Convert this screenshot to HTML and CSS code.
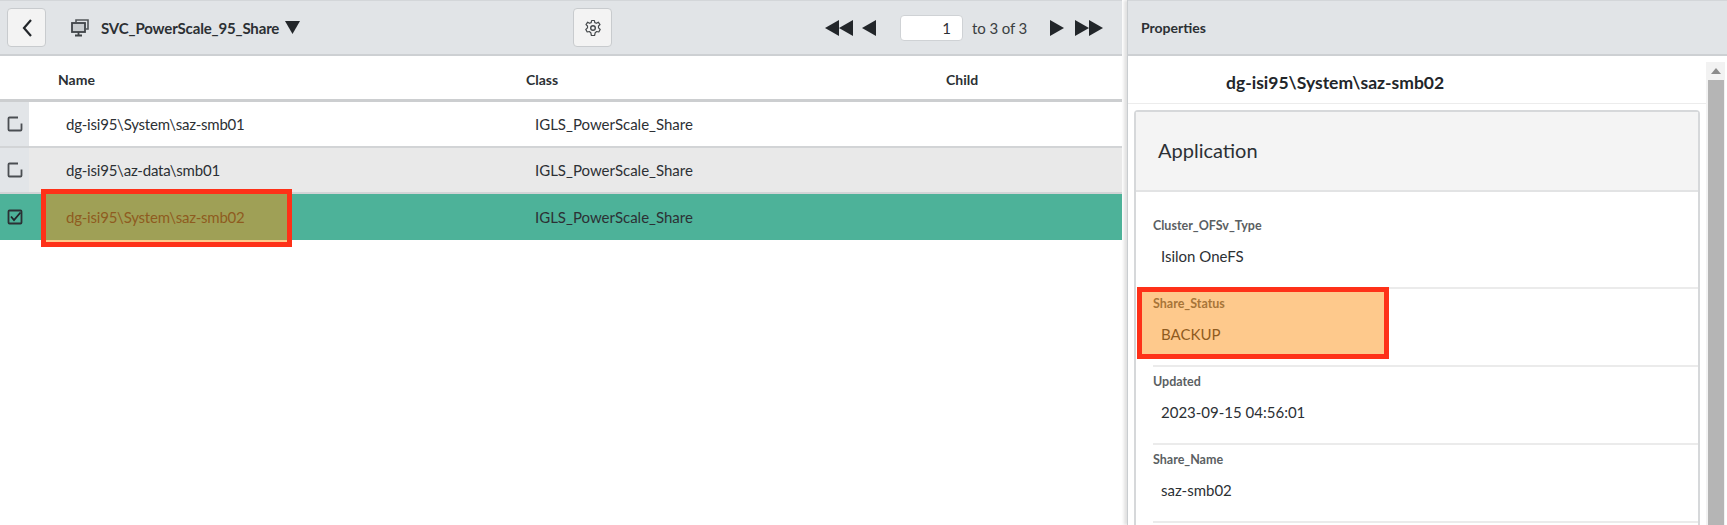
FILE: index.html
```html
<!DOCTYPE html>
<html lang="en">
<head>
  <meta charset="UTF-8" />
  <title>SVC_PowerScale_95_Share</title>
  <link rel="stylesheet" href="styles.css">
</head>
<body>
  <main class="list-pane">
    <div class="toolbar">
      <button class="tool-btn btn-return" aria-label="Back">
        <svg width="12" height="20" viewBox="0 0 12 20"><path d="M10 2 L3 10 L10 18" fill="none" stroke="#22262a" stroke-width="2.2"/></svg>
      </button>
      <div class="list-title">
        <svg class="monitor" width="18" height="18" viewBox="0 0 18 18"><path d="M5 3 V1 H17 V10 H15" fill="none" stroke="#53575b" stroke-width="1.6"/><rect x="1" y="4" width="13" height="9" fill="#c9cdd0" stroke="#3f4347" stroke-width="1.8"/><path d="M4 16.5 H11 M7.5 13 V16" stroke="#3f4347" stroke-width="1.8"/></svg>
        <span>SVC_PowerScale_95_Share</span>
        <svg width="15" height="13" viewBox="0 0 15 13"><path d="M0 0 H15 L7.5 13 Z" fill="#22262a"/></svg>
      </div>
      <button class="tool-btn btn-gear" aria-label="Settings">
        <svg width="18" height="18" viewBox="0 0 18 18"><circle cx="9" cy="9" r="2.3" fill="none" stroke="#45494c" stroke-width="1.4"/><path d="M7.6 1.5 H10.4 L10.8 3.6 L12.5 4.3 L14.3 3.2 L16 5.6 L14.5 7 V8.9 L16.2 10.4 L14.8 13 L12.7 12.5 L11.2 13.7 L10.6 16.5 H7.4 L6.8 13.7 L5.3 12.5 L3.2 13 L1.8 10.4 L3.5 8.9 V7 L2 5.6 L3.7 3.2 L5.5 4.3 L7.2 3.6 Z" fill="none" stroke="#45494c" stroke-width="1.2" stroke-linejoin="round"/></svg>
      </button>
      <div class="pager">
        <svg width="28" height="16" viewBox="0 0 28 16"><path d="M14 0 V16 L0 8 Z M28 0 V16 L14 8 Z" fill="#22262a"/></svg>
        <svg class="pager-prev" width="14" height="16" viewBox="0 0 14 16"><path d="M14 0 V16 L0 8 Z" fill="#22262a"/></svg>
        <input class="page-input" type="text" value="1" aria-label="Page">
        <span class="page-text">to 3 of 3</span>
        <svg class="pager-next" width="14" height="16" viewBox="0 0 14 16"><path d="M0 0 V16 L14 8 Z" fill="#22262a"/></svg>
        <svg width="28" height="16" viewBox="0 0 28 16"><path d="M0 0 V16 L14 8 Z M14 0 V16 L28 8 Z" fill="#22262a"/></svg>
      </div>
    </div>

    <div class="list-head">
      <div>Name</div>
      <div>Class</div>
      <div>Child</div>
    </div>

    <div class="list-row">
      <div class="check-cell">
        <svg width="16" height="16" viewBox="0 0 16 16"><path d="M11 1.5 H2.5 Q1.5 1.5 1.5 2.5 V13.5 Q1.5 14.5 2.5 14.5 H13.5 Q14.5 14.5 14.5 13.5 V7.5" fill="none" stroke="#4a4e52" stroke-width="1.8"/></svg>
      </div>
      <div class="cell cell-name">dg-isi95\System\saz-smb01</div>
      <div class="cell">IGLS_PowerScale_Share</div>
    </div>
    <div class="list-row row-alt">
      <div class="check-cell">
        <svg width="16" height="16" viewBox="0 0 16 16"><path d="M11 1.5 H2.5 Q1.5 1.5 1.5 2.5 V13.5 Q1.5 14.5 2.5 14.5 H13.5 Q14.5 14.5 14.5 13.5 V7.5" fill="none" stroke="#4a4e52" stroke-width="1.8"/></svg>
      </div>
      <div class="cell cell-name">dg-isi95\az-data\smb01</div>
      <div class="cell">IGLS_PowerScale_Share</div>
    </div>
    <div class="list-row row-selected">
      <div class="check-cell">
        <svg width="16" height="16" viewBox="0 0 16 16"><rect x="1.5" y="1.5" width="13" height="13" rx="1" fill="none" stroke="#2c3034" stroke-width="1.8"/><path d="M4 7.5 L7 11 L13.5 3.5" fill="none" stroke="#22262a" stroke-width="1.8"/></svg>
      </div>
      <div class="cell cell-name">dg-isi95\System\saz-smb02</div>
      <div class="cell">IGLS_PowerScale_Share</div>
      <div class="mark mark-row"></div>
    </div>
  </main>

  <aside class="props-pane">
    <div class="props-header">Properties</div>
    <div class="props-body">
      <div class="props-scroll">
        <div class="props-title">dg-isi95\System\saz-smb02</div>
        <section class="card">
          <h2 class="card-head">Application</h2>
          <div class="field field-first">
            <div class="field-label">Cluster_OFSv_Type</div>
            <div class="field-value">Isilon OneFS</div>
          </div>
          <div class="field">
            <div class="field-label">Share_Status</div>
            <div class="field-value">BACKUP</div>
            <div class="mark mark-field"></div>
          </div>
          <div class="field">
            <div class="field-label">Updated</div>
            <div class="field-value">2023-09-15 04:56:01</div>
          </div>
          <div class="field">
            <div class="field-label">Share_Name</div>
            <div class="field-value">saz-smb02</div>
          </div>
        </section>
      </div>
      <div class="scrollbar">
        <svg width="10" height="6" viewBox="0 0 10 6"><path d="M5 0 L10 6 H0 Z" fill="#8b8b8b"/></svg>
        <div class="scroll-thumb"></div>
      </div>
    </div>
  </aside>
</body>
</html>
```

FILE: styles.css
```css
* {
  margin: 0;
  padding: 0;
  box-sizing: border-box;
}

html, body {
  height: 525px;
  overflow: hidden;
  background: #fff;
  font-family: Lato, 'Noto Sans', sans-serif;
  font-size: 15px;
  color: #2c3034;
}

body {
  display: flex;
}

.list-pane {
  width: 1122px;
  flex: none;
}

.props-pane {
  flex: 1;
  margin-left: 5px;
  border-left: 1px solid #c9cdd0;
  box-shadow: -3px 0 3px rgba(0, 0, 0, 0.12);
  min-width: 0;
}

/* toolbar */
.toolbar {
  display: flex;
  align-items: center;
  height: 56px;
  padding-left: 7px;
  background: #e1e4e7;
  border-top: 1px solid #d3d6d9;
  border-bottom: 2px solid #cdd0d3;
}

.tool-btn {
  display: flex;
  align-items: center;
  justify-content: center;
  width: 39px;
  height: 39px;
  background: #f3f3f3;
  border: 1px solid #c8cbce;
  border-radius: 4px;
}

.list-title {
  display: flex;
  align-items: center;
  gap: 6px;
  margin-left: 25px;
  font-weight: 700;
  font-size: 15px;
  letter-spacing: -0.15px;
  width: 502px;
}

.monitor {
  margin-right: 6px;
}

.pager {
  display: flex;
  align-items: center;
  margin-left: 213px;
}

.pager-prev {
  margin-left: 9px;
}

.page-input {
  width: 63px;
  height: 26px;
  margin-left: 24px;
  padding-right: 11px;
  text-align: right;
  font: inherit;
  color: #2c3034;
  background: #fff;
  border: 1px solid #cfd2d5;
  border-radius: 4px;
}

.page-text {
  margin-left: 9px;
  width: 64px;
  letter-spacing: -0.1px;
  color: #3a3e42;
}

.pager-next {
  margin-left: 14px;
  margin-right: 11px;
}

/* list */
.list-head {
  display: grid;
  grid-template-columns: 468px 420px 1fr;
  height: 46px;
  padding: 3px 0 0 58px;
  align-items: center;
  font-weight: 700;
  font-size: 14px;
  border-bottom: 3px solid #ccced0;
}

.list-row {
  display: grid;
  grid-template-columns: 29px 499px 1fr;
  position: relative;
  height: 46px;
  align-items: center;
  border-bottom: 2px solid #d2d4d6;
}

.check-cell {
  display: flex;
  align-items: center;
  height: 100%;
  padding-left: 7px;
  background: #e2e5e8;
}

.cell {
  padding: 0 0 1px 7px;
}

.cell-name {
  padding-left: 37px;
  letter-spacing: -0.22px;
}

.row-alt {
  background: #e9e9e9;
}

.row-selected {
  background: #4db299;
  border-bottom: 0;
}

.row-selected .check-cell {
  background: #4db299;
}

/* red annotation boxes drawn over the screenshot */
.mark {
  position: absolute;
  border: 5px solid #fe3118;
  background: rgba(252, 140, 10, 0.47);
}

.mark-row {
  left: 41px;
  top: -5px;
  width: 251px;
  height: 58px;
}

.mark-field {
  left: -16px;
  top: -2px;
  width: 252px;
  height: 72px;
}

/* properties */
.props-header {
  height: 56px;
  padding: 18px 13px 0;
  background: #e1e4e7;
  border-top: 1px solid #d3d6d9;
  border-bottom: 2px solid #cdd0d3;
  font-weight: 700;
  font-size: 14px;
}

.props-body {
  display: flex;
}

.props-scroll {
  flex: 1;
  min-width: 0;
}

.props-title {
  height: 48px;
  padding: 16px 0 0 98px;
  font-weight: 700;
  font-size: 17.5px;
  color: #22262a;
  border-bottom: 1px solid #ececec;
}

.card {
  height: 420px;
  margin: 6px 6px 0 6px;
  border: 2px solid #d6d8da;
  border-bottom: 0;
  border-radius: 4px 4px 0 0;
}

.card-head {
  height: 80px;
  padding: 26px 0 0 22px;
  background: #f4f4f4;
  border-bottom: 2px solid #e2e3e4;
  font-weight: 400;
  font-size: 20px;
  color: #2c3034;
}

.field {
  position: relative;
  height: 78px;
  margin-left: 17px;
  padding-top: 7px;
  border-bottom: 2px solid #ebebeb;
}

.field-first {
  height: 97px;
  padding-top: 26px;
}

.field-label {
  font-size: 12.5px;
  font-weight: 700;
  color: #5b5f63;
}

.field-value {
  margin-top: 14px;
  padding-left: 8px;
  font-size: 15px;
}

.scrollbar {
  display: flex;
  flex: none;
  flex-direction: column;
  align-items: center;
  width: 19px;
  margin: 6px 2px 0 0;
  padding-top: 6px;
  background: #f2f2f2;
}

.scroll-thumb {
  width: 16px;
  flex: 1;
  margin-top: 6px;
  background: #b5b5b5;
}
```
